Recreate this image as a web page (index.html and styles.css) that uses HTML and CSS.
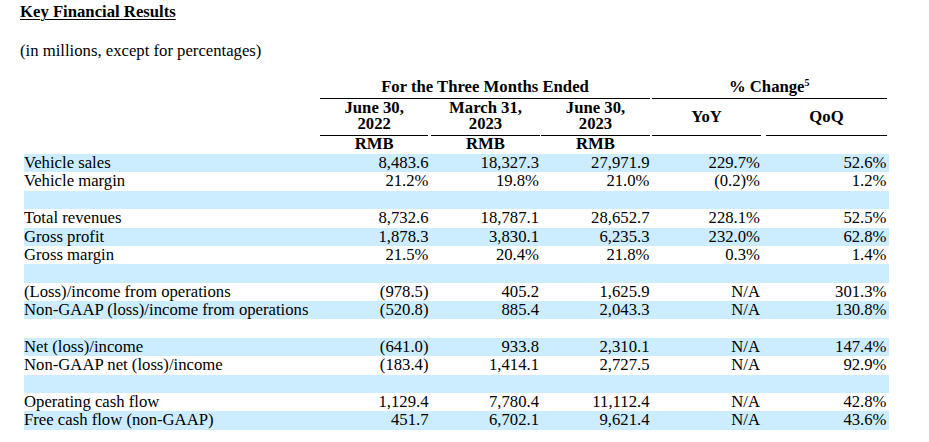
FILE: index.html
```html
<!DOCTYPE html>
<html lang="en">
<head>
<meta charset="utf-8">
<title>Key Financial Results</title>
<link rel="stylesheet" href="styles.css">
</head>
<body>
<div class="page">
  <h1 class="title">Key Financial Results</h1>
  <p class="subtitle">(in millions, except for percentages)</p>

  <div class="fin">
    <div class="row head-a">
      <div class="period">For the Three Months Ended</div>
      <div class="change">% Change<sup>5</sup></div>
    </div>
    <div class="row head-b">
      <div class="h c1"><div class="ln">June 30,</div><div class="ln">2022</div></div>
      <div class="h c2"><div class="ln">March 31,</div><div class="ln">2023</div></div>
      <div class="h c3"><div class="ln">June 30,</div><div class="ln">2023</div></div>
      <div class="h c4"><div class="ln single">YoY</div></div>
      <div class="h c5"><div class="ln single">QoQ</div></div>
    </div>
    <div class="row head-c">
      <div class="rmb c1">RMB</div>
      <div class="rmb c2">RMB</div>
      <div class="rmb c3">RMB</div>
    </div>

    <div class="row band"><div class="lbl">Vehicle sales</div><div class="n c1">8,483.6</div><div class="n c2">18,327.3</div><div class="n c3">27,971.9</div><div class="n c4">229.7%</div><div class="n c5">52.6%</div></div>
    <div class="row"><div class="lbl">Vehicle margin</div><div class="n c1">21.2%</div><div class="n c2">19.8%</div><div class="n c3">21.0%</div><div class="n c4">(0.2)%</div><div class="n c5">1.2%</div></div>
    <div class="row band"></div>
    <div class="row"><div class="lbl">Total revenues</div><div class="n c1">8,732.6</div><div class="n c2">18,787.1</div><div class="n c3">28,652.7</div><div class="n c4">228.1%</div><div class="n c5">52.5%</div></div>
    <div class="row band"><div class="lbl">Gross profit</div><div class="n c1">1,878.3</div><div class="n c2">3,830.1</div><div class="n c3">6,235.3</div><div class="n c4">232.0%</div><div class="n c5">62.8%</div></div>
    <div class="row"><div class="lbl">Gross margin</div><div class="n c1">21.5%</div><div class="n c2">20.4%</div><div class="n c3">21.8%</div><div class="n c4">0.3%</div><div class="n c5">1.4%</div></div>
    <div class="row band"></div>
    <div class="row"><div class="lbl">(Loss)/income from operations</div><div class="n c1">(978.5)</div><div class="n c2">405.2</div><div class="n c3">1,625.9</div><div class="n c4">N/A</div><div class="n c5">301.3%</div></div>
    <div class="row band"><div class="lbl">Non-GAAP (loss)/income from operations</div><div class="n c1">(520.8)</div><div class="n c2">885.4</div><div class="n c3">2,043.3</div><div class="n c4">N/A</div><div class="n c5">130.8%</div></div>
    <div class="row"></div>
    <div class="row band"><div class="lbl">Net (loss)/income</div><div class="n c1">(641.0)</div><div class="n c2">933.8</div><div class="n c3">2,310.1</div><div class="n c4">N/A</div><div class="n c5">147.4%</div></div>
    <div class="row"><div class="lbl">Non-GAAP net (loss)/income</div><div class="n c1">(183.4)</div><div class="n c2">1,414.1</div><div class="n c3">2,727.5</div><div class="n c4">N/A</div><div class="n c5">92.9%</div></div>
    <div class="row band"></div>
    <div class="row"><div class="lbl">Operating cash flow</div><div class="n c1">1,129.4</div><div class="n c2">7,780.4</div><div class="n c3">11,112.4</div><div class="n c4">N/A</div><div class="n c5">42.8%</div></div>
    <div class="row band"><div class="lbl">Free cash flow (non-GAAP)</div><div class="n c1">451.7</div><div class="n c2">6,702.1</div><div class="n c3">9,621.4</div><div class="n c4">N/A</div><div class="n c5">43.6%</div></div>
  </div>
</div>
</body>
</html>
```
FILE: styles.css
```css
html, body {
  margin: 0;
  padding: 0;
  background: #ffffff;
}

body {
  font-family: "Liberation Serif", "Times New Roman", serif;
  font-size: 16.7px;
  color: #000000;
}

.page {
  padding: 3px 0 0 20px;
}

.title {
  margin: 0;
  font-size: 16.7px;
  font-weight: bold;
  line-height: 18px;
  text-decoration: underline;
  text-decoration-thickness: 1.3px;
  text-underline-offset: 2px;
}

.subtitle {
  margin: 21.2px 0 0 0;
  line-height: 18.4px;
}

.fin {
  margin: 17.6px 0 0 4px;
  width: 865px;
}

.row {
  display: grid;
  grid-template-columns: 296px 110px 111px 110px 112px 126px;
  height: 18.4px;
  line-height: 18.4px;
  white-space: nowrap;
}

.band {
  background: #ccecff;
}

.lbl {
  grid-column: 1;
}

.c1 { grid-column: 2; }
.c2 { grid-column: 3; }
.c3 { grid-column: 4; }
.c4 { grid-column: 5; }
.c5 { grid-column: 6; }

.n {
  text-align: right;
}

.n.c1 { padding-right: 1.5px; }
.n.c2 { padding-right: 2px; }
.n.c3 { padding-right: 1.5px; }
.n.c4 { padding-right: 3px; }
.n.c5 { padding-right: 2.5px; }

/* header */
.head-a {
  height: auto;
  font-weight: bold;
  text-align: center;
}

.period {
  grid-column: 2 / span 3;
  margin-right: 1px;
  padding-bottom: 1.7px;
  border-bottom: 1px solid #000;
}

.change {
  grid-column: 5 / span 2;
  margin: 0 2.5px 0 1px;
  padding-bottom: 1.7px;
  border-bottom: 1px solid #000;
}

.change sup {
  font-size: 10px;
  line-height: 0;
  vertical-align: 6px;
}

.head-b {
  height: auto;
  font-weight: bold;
  text-align: center;
  line-height: 16px;
}

.h {
  display: flex;
  flex-direction: column;
  align-items: center;
  justify-content: center;
  padding: 1.06px 0 2.94px 0;
  border-bottom: 1px solid #000;
}

.ln {
  height: 16px;
}

.ln.single {
  margin-top: 1px;
}

.h.c1 { margin-right: 1.7px; }
.h.c2 { margin: 0 1px 0 1px; }
.h.c3 { margin-right: 1px; }
.h.c4 { margin: 0 2px 0 1px; }
.h.c5 { margin: 0 2px 0 3px; }

.head-c {
  height: 17.7px;
  line-height: 16.1px;
  font-weight: bold;
  text-align: center;
}

.rmb.c1 { margin-right: 1.7px; }
.rmb.c2 { margin: 0 1px 0 1px; }
.rmb.c3 { margin-right: 1px; }
```
